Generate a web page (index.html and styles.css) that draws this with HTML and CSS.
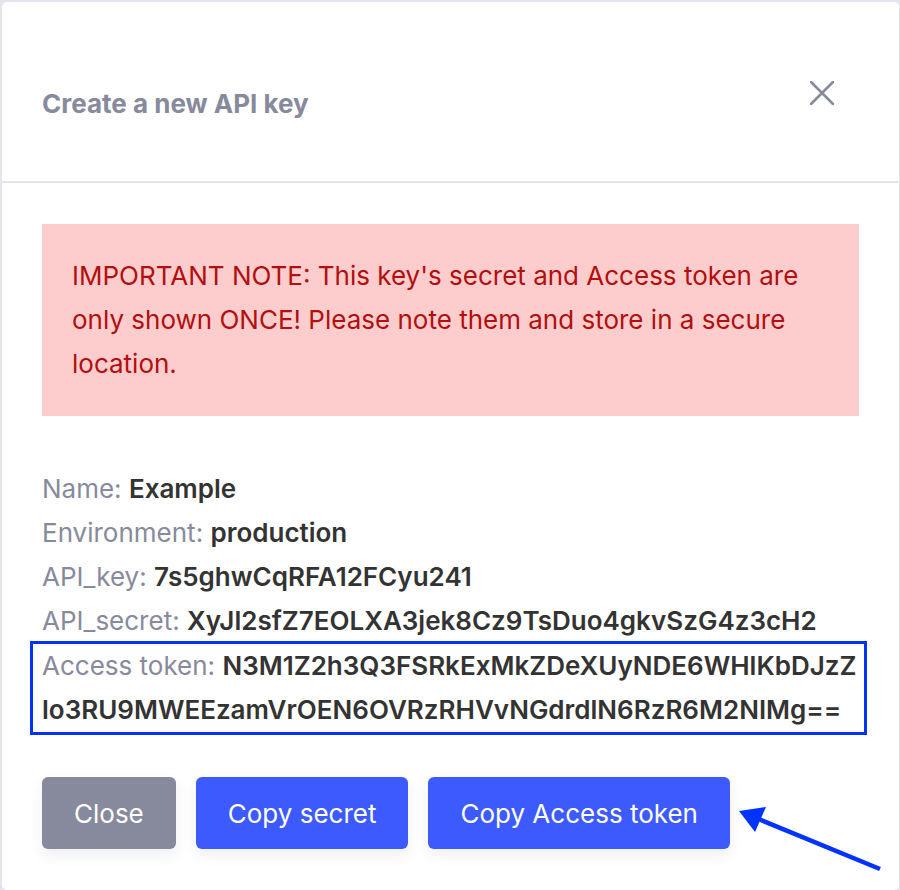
FILE: index.html
```html
<!DOCTYPE html>
<html lang="en">
<head>
<meta charset="utf-8">
<title>Create a new API key</title>
<link rel="stylesheet" href="styles.css">
</head>
<body>
<div class="modal">
  <div class="modal-header">
    <h2 class="modal-title">Create a new API key</h2>
    <button class="close-x" aria-label="Close">
      <svg width="24" height="24" viewBox="0 0 24 24"><path d="M1 1L23 23M23 1L1 23" stroke="#878a9c" stroke-width="2.6" stroke-linecap="round" fill="none"/></svg>
    </button>
  </div>
  <div class="modal-body">
    <div class="alert">IMPORTANT NOTE: This key's secret and Access token are only shown ONCE! Please note them and store in a secure location.</div>
    <div class="info">
      <p class="row"><span class="label">Name:</span> <b>Example</b></p>
      <p class="row"><span class="label">Environment:</span> <b>production</b></p>
      <p class="row"><span class="label">API_key:</span> <b>7s5ghwCqRFA12FCyu241</b></p>
      <p class="row"><span class="label">API_secret:</span> <b>XyJl2sfZ7EOLXA3jek8Cz9TsDuo4gkvSzG4z3cH2</b></p>
      <div class="highlight">
        <p class="row token"><span class="label">Access token:</span> <b>N3M1Z2h3Q3FSRkExMkZDeXUyNDE6WHlKbDJzZlo3RU9MWEEzamVrOEN6OVRzRHVvNGdrdlN6RzR6M2NIMg==</b></p>
      </div>
    </div>
    <div class="actions">
      <button class="btn btn-gray">Close</button>
      <button class="btn btn-blue">Copy secret</button>
      <button class="btn btn-blue">Copy Access token</button>
    </div>
  </div>
  <svg class="arrow" width="900" height="890" viewBox="0 0 900 890">
    <line x1="880" y1="869" x2="756" y2="818" stroke="#0033ff" stroke-width="4.5"/>
    <polygon points="739,811 766,807 755,832" fill="#0033ff"/>
  </svg>
</div>
</body>
</html>
```
FILE: styles.css
```css
* { box-sizing: border-box; }
html, body { margin: 0; padding: 0; }
body {
  background: #e4e5eb;
  font-family: Inter, "Noto Sans", sans-serif;
  width: 900px;
  height: 890px;
  overflow: hidden;
}
.modal {
  position: relative;
  width: 897px;
  height: 888px;
  margin: 2px 0 0 2px;
  background: #fff;
  border-radius: 5px;
}
.modal-header {
  height: 181px;
  border-bottom: 2px solid #e4e5eb;
  display: flex;
  align-items: center;
  justify-content: space-between;
  padding: 0 65px 0 40px;
}
.modal-title {
  margin: 24px 0 0 0;
  font-size: 26px;
  font-weight: 700;
  color: #878a9c;
}
.close-x {
  background: none;
  border: 0;
  padding: 0;
  margin-top: 3px;
  width: 24px;
  height: 24px;
  display: flex;
}
.modal-body {
  padding: 41px 40px 40px 40px;
}
.alert {
  background: #fdcdcd;
  color: #b20f0f;
  font-size: 26px;
  line-height: 44px;
  padding: 30px 30px 30px 30px;
}
.info {
  margin-top: 51px;
  font-size: 26px;
  line-height: 44px;
  color: #333;
}
.row { margin: 0; }
.label { color: #878a9c; }
.row b { font-weight: 600; color: #333; }
.highlight {
  border: 3px solid #0033ff;
  margin: -2px -8px 0 -12px;
  padding: 0 5px 0 9px;
}
.token { word-break: break-all; }
.actions {
  margin-top: 42px;
  display: flex;
  gap: 20px;
}
.btn {
  font-family: Inter, "Noto Sans", sans-serif;
  font-size: 26px;
  color: #fff;
  border: 0;
  border-radius: 6px;
  height: 72px;
  padding: 0 32px;
  box-shadow: 0 6px 14px rgba(40, 50, 90, 0.08);
}
.btn-gray { background: #878a9c; }
.btn-blue { background: #3d5afe; }
.arrow {
  position: absolute;
  left: -2px;
  top: -2px;
  pointer-events: none;
}
```
